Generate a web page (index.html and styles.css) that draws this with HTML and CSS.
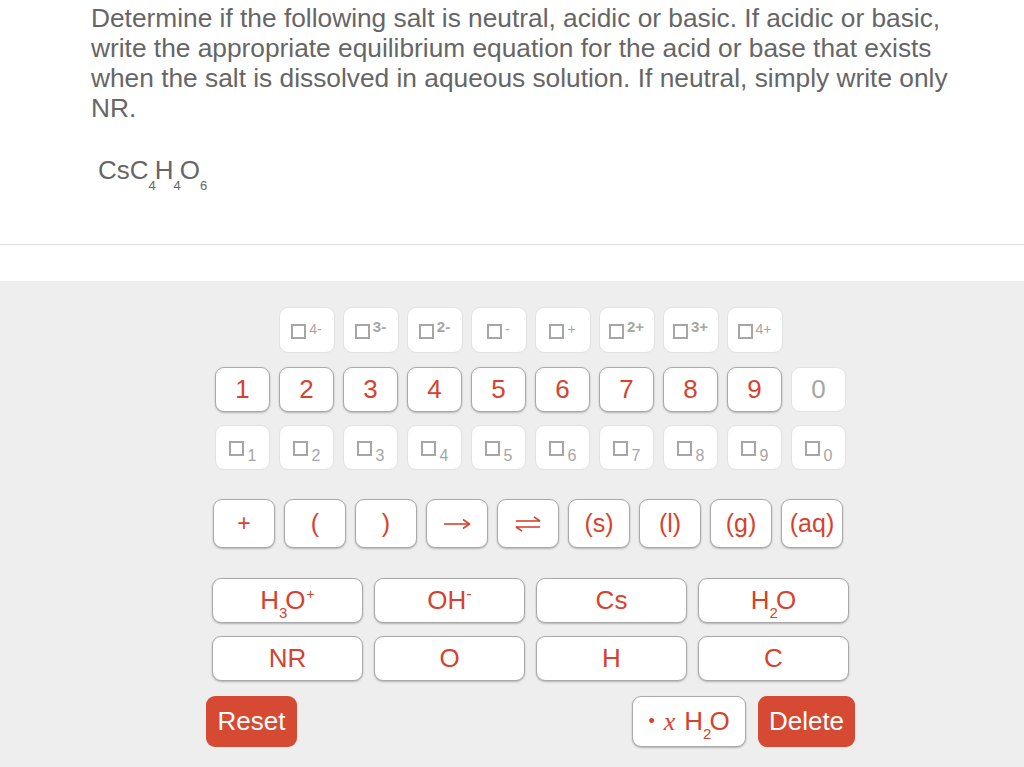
FILE: index.html
```html
<!DOCTYPE html>
<html>
<head>
<meta charset="utf-8">
<link rel="stylesheet" href="styles.css">
</head>
<body>
<div class="question">
  <p class="prompt">Determine if the following salt is neutral, acidic or basic. If acidic or basic, write the appropriate equilibrium equation for the acid or base that exists when the salt is dissolved in aqueous solution. If neutral, simply write only NR.</p>
  <p class="formula">CsC<sub>4</sub>H<sub>4</sub>O<sub>6</sub></p>
</div>
<div class="divider"></div>
<div class="panel">
  <div class="keypad">
    <div class="row charges">
      <div class="key off"><span class="lbl"><span class="box"></span><sup class="chg small">4-</sup></span></div>
      <div class="key off"><span class="lbl"><span class="box"></span><sup class="chg">3-</sup></span></div>
      <div class="key off"><span class="lbl"><span class="box"></span><sup class="chg">2-</sup></span></div>
      <div class="key off"><span class="lbl"><span class="box"></span><sup class="chg small">-</sup></span></div>
      <div class="key off"><span class="lbl"><span class="box"></span><sup class="chg small">+</sup></span></div>
      <div class="key off"><span class="lbl"><span class="box"></span><sup class="chg">2+</sup></span></div>
      <div class="key off"><span class="lbl"><span class="box"></span><sup class="chg">3+</sup></span></div>
      <div class="key off"><span class="lbl"><span class="box"></span><sup class="chg small">4+</sup></span></div>
    </div>
    <div class="row digits">
      <div class="key on">1</div>
      <div class="key on">2</div>
      <div class="key on">3</div>
      <div class="key on">4</div>
      <div class="key on">5</div>
      <div class="key on">6</div>
      <div class="key on">7</div>
      <div class="key on">8</div>
      <div class="key on">9</div>
      <div class="key off grey">0</div>
    </div>
    <div class="row subs">
      <div class="key off"><span class="lbl"><span class="box"></span><sub class="sb">1</sub></span></div>
      <div class="key off"><span class="lbl"><span class="box"></span><sub class="sb">2</sub></span></div>
      <div class="key off"><span class="lbl"><span class="box"></span><sub class="sb">3</sub></span></div>
      <div class="key off"><span class="lbl"><span class="box"></span><sub class="sb">4</sub></span></div>
      <div class="key off"><span class="lbl"><span class="box"></span><sub class="sb">5</sub></span></div>
      <div class="key off"><span class="lbl"><span class="box"></span><sub class="sb">6</sub></span></div>
      <div class="key off"><span class="lbl"><span class="box"></span><sub class="sb">7</sub></span></div>
      <div class="key off"><span class="lbl"><span class="box"></span><sub class="sb">8</sub></span></div>
      <div class="key off"><span class="lbl"><span class="box"></span><sub class="sb">9</sub></span></div>
      <div class="key off"><span class="lbl"><span class="box"></span><sub class="sb">0</sub></span></div>
    </div>
    <div class="row symbols">
      <div class="key on plus">+</div>
      <div class="key on">(</div>
      <div class="key on">)</div>
      <div class="key on">
        <svg class="arrow" width="28" height="14" viewBox="0 0 28 14" fill="none" stroke="#d5432e" stroke-width="1.6">
          <line x1="1" y1="7" x2="26" y2="7"/>
          <polyline points="20,2.5 26.5,7 20,11.5"/>
        </svg>
      </div>
      <div class="key on">
        <svg class="arrow" width="28" height="16" viewBox="0 0 28 16" fill="none" stroke="#d5432e" stroke-width="1.6">
          <line x1="2" y1="5" x2="26" y2="5"/>
          <polyline points="20,0.8 26,5"/>
          <line x1="2" y1="11" x2="26" y2="11"/>
          <polyline points="8,15.2 2,11"/>
        </svg>
      </div>
      <div class="key on">(s)</div>
      <div class="key on">(l)</div>
      <div class="key on">(g)</div>
      <div class="key on">(aq)</div>
    </div>
    <div class="row species first">
      <div class="key on"><span class="lbl">H<sub class="ssub">3</sub>O<sup class="ssup">+</sup></span></div>
      <div class="key on"><span class="lbl">OH<sup class="ssup minus">-</sup></span></div>
      <div class="key on">Cs</div>
      <div class="key on"><span class="lbl">H<sub class="ssub">2</sub>O</span></div>
    </div>
    <div class="row species">
      <div class="key on">NR</div>
      <div class="key on">O</div>
      <div class="key on">H</div>
      <div class="key on">C</div>
    </div>
    <div class="row actions">
      <div class="btn red reset">Reset</div>
      <div class="right">
        <div class="key on water"><span class="lbl"><span class="dot">•</span><i class="mx">x</i>H<sub class="ssub">2</sub>O</span></div>
        <div class="btn red del">Delete</div>
      </div>
    </div>
  </div>
</div>
</body>
</html>
```

FILE: styles.css
```css
html, body {
  margin: 0;
  padding: 0;
  background: #ffffff;
  font-family: "Liberation Sans", Arial, Helvetica, sans-serif;
}

.question {
  padding: 3px 0 0 91px;
  width: 880px;
  color: #666666;
}

.prompt {
  margin: 0;
  font-size: 26.3px;
  line-height: 30px;
}

.formula {
  margin: 32px 0 0 7px;
  font-size: 26px;
  line-height: 30px;
  height: 30px;
}

.formula sub {
  font-size: 13px;
  vertical-align: -11px;
  line-height: 0;
  margin-left: 0;
  margin-right: -1px;
}

.divider {
  margin-top: 59px;
  height: 1px;
  background: #dddddd;
}

.panel {
  margin-top: 36px;
  background: #eeeeee;
  height: 486px;
  padding-top: 26px;
  box-sizing: border-box;
}

.keypad {
  margin-left: 206px;
  width: 649px;
}

.row {
  display: flex;
  justify-content: center;
}

.key {
  box-sizing: border-box;
  background: #ffffff;
  border-radius: 9px;
  display: flex;
  align-items: center;
  justify-content: center;
  color: #d5432e;
  font-size: 26px;
}

.key.on {
  border: 1px solid #a9a9a9;
  box-shadow: 0 1px 2px rgba(0, 0, 0, 0.25);
}

.key.off {
  border: 1px solid #e2e2e2;
  color: #a6a6a6;
}

.key.grey {
  color: #a6a6a6;
}

.lbl {
  display: inline-block;
  white-space: nowrap;
}

.box {
  display: inline-block;
  width: 15px;
  height: 15px;
  border: 2px solid #a6a6a6;
  box-sizing: border-box;
}

.charges {
  gap: 8px;
}

.charges .key {
  width: 56px;
  height: 46px;
}

.chg {
  font-size: 15px;
  color: #a6a6a6;
  margin-left: 3px;
  vertical-align: 7px;
  line-height: 0;
  font-weight: bold;
}

.chg.small {
  font-weight: normal;
  font-size: 14px;
  vertical-align: 5px;
}

.digits {
  margin-top: 14px;
  gap: 9px;
}

.digits .key {
  width: 55px;
  height: 45px;
}

.subs {
  margin-top: 13px;
  gap: 9px;
}

.subs .key {
  width: 55px;
  height: 45px;
}

.sb {
  font-size: 16px;
  color: #a6a6a6;
  margin-left: 4px;
  vertical-align: -5px;
  line-height: 0;
}

.symbols {
  margin-top: 29px;
  gap: 9px;
  justify-content: flex-start;
  padding-left: 7px;
}

.symbols .key {
  width: 62px;
  height: 49px;
  font-size: 25px;
}

.symbols .plus {
  font-size: 23px;
}

.arrow {
  display: block;
}

.species {
  margin-top: 13px;
  gap: 11px;
}

.species.first {
  margin-top: 30px;
}

.species .key {
  width: 151px;
  height: 45px;
}

.ssub {
  font-size: 15px;
  vertical-align: -9px;
  line-height: 0;
  margin: 0 -2px 0 0;
}

.ssup {
  font-size: 14px;
  vertical-align: 10px;
  line-height: 0;
  margin-left: 1px;
}

.ssup.minus {
  font-size: 16px;
  margin-left: 0;
}

.actions {
  margin-top: 15px;
  justify-content: space-between;
}

.right {
  display: flex;
  gap: 12px;
}

.btn {
  box-sizing: border-box;
  height: 51px;
  border-radius: 9px;
  display: flex;
  align-items: center;
  justify-content: center;
  font-size: 26px;
}

.btn.red {
  background: #d64a33;
  color: #ffffff;
}

.reset {
  width: 91px;
}

.del {
  width: 97px;
}

.key.water {
  width: 114px;
  height: 51px;
}

.dot {
  font-size: 18px;
  vertical-align: 3px;
  margin-right: 9px;
}

.mx {
  font-family: "Liberation Serif", "DejaVu Serif", serif;
  font-style: italic;
  font-size: 26px;
  margin-right: 9px;
}
```
